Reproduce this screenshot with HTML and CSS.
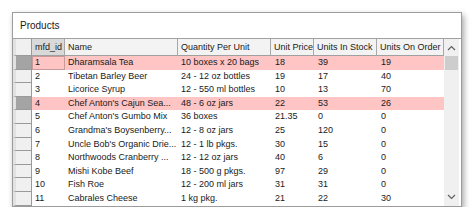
FILE: index.html
```html
<!DOCTYPE html>
<html>
<head>
  <meta charset="UTF-8">
  <title>Products</title>
  <link rel="stylesheet" href="styles.css">
</head>
<body>
  <div class="window">
    <div class="title">Products</div>

    <div class="grid">
      <div class="data">
        <div class="head">
          <div class="ind"></div>
          <div class="cell sorted">mfd_id</div>
          <div class="cell">Name</div>
          <div class="cell">Quantity Per Unit</div>
          <div class="cell">Unit Price</div>
          <div class="cell">Units In Stock</div>
          <div class="cell">Units On Order</div>
        </div>

        <div class="row sel">
          <div class="ind"></div><div class="cell focus">1</div><div class="cell">Dharamsala Tea</div><div class="cell">10 boxes x 20 bags</div><div class="cell num">18</div><div class="cell num">39</div><div class="cell num">19</div>
        </div>
        <div class="row">
          <div class="ind"></div><div class="cell">2</div><div class="cell">Tibetan Barley Beer</div><div class="cell">24 - 12 oz bottles</div><div class="cell num">19</div><div class="cell num">17</div><div class="cell num">40</div>
        </div>
        <div class="row">
          <div class="ind"></div><div class="cell">3</div><div class="cell">Licorice Syrup</div><div class="cell">12 - 550 ml bottles</div><div class="cell num">10</div><div class="cell num">13</div><div class="cell num">70</div>
        </div>
        <div class="row sel">
          <div class="ind"></div><div class="cell">4</div><div class="cell">Chef Anton's Cajun Sea...</div><div class="cell">48 - 6 oz jars</div><div class="cell num">22</div><div class="cell num">53</div><div class="cell num">26</div>
        </div>
        <div class="row">
          <div class="ind"></div><div class="cell">5</div><div class="cell">Chef Anton's Gumbo Mix</div><div class="cell">36 boxes</div><div class="cell num">21.35</div><div class="cell num">0</div><div class="cell num">0</div>
        </div>
        <div class="row">
          <div class="ind"></div><div class="cell">6</div><div class="cell">Grandma's Boysenberry...</div><div class="cell">12 - 8 oz jars</div><div class="cell num">25</div><div class="cell num">120</div><div class="cell num">0</div>
        </div>
        <div class="row">
          <div class="ind"></div><div class="cell">7</div><div class="cell">Uncle Bob's Organic Drie...</div><div class="cell">12 - 1 lb pkgs.</div><div class="cell num">30</div><div class="cell num">15</div><div class="cell num">0</div>
        </div>
        <div class="row">
          <div class="ind"></div><div class="cell">8</div><div class="cell">Northwoods Cranberry ...</div><div class="cell">12 - 12 oz jars</div><div class="cell num">40</div><div class="cell num">6</div><div class="cell num">0</div>
        </div>
        <div class="row">
          <div class="ind"></div><div class="cell">9</div><div class="cell">Mishi Kobe Beef</div><div class="cell">18 - 500 g pkgs.</div><div class="cell num">97</div><div class="cell num">29</div><div class="cell num">0</div>
        </div>
        <div class="row">
          <div class="ind"></div><div class="cell">10</div><div class="cell">Fish Roe</div><div class="cell">12 - 200 ml jars</div><div class="cell num">31</div><div class="cell num">31</div><div class="cell num">0</div>
        </div>
        <div class="row">
          <div class="ind"></div><div class="cell">11</div><div class="cell">Cabrales Cheese</div><div class="cell">1 kg pkg.</div><div class="cell num">21</div><div class="cell num">22</div><div class="cell num">30</div>
        </div>
      </div>

      <div class="scrollbar">
        <div class="arrow">
          <svg width="9" height="6" viewBox="0 0 9 6"><path d="M1 5 L4.5 1.5 L8 5" fill="none" stroke="#606060" stroke-width="1.2"/></svg>
        </div>
        <div class="thumb"></div>
        <div class="track"></div>
        <div class="arrow">
          <svg width="9" height="6" viewBox="0 0 9 6"><path d="M1 1 L4.5 4.5 L8 1" fill="none" stroke="#606060" stroke-width="1.2"/></svg>
        </div>
      </div>
    </div>
  </div>
</body>
</html>
```

FILE: styles.css
```css
body {
  margin: 0;
  background: #fff;
  font-family: 'Liberation Sans', Arial, sans-serif;
  color: #1a1a1a;
}

.window {
  margin: 12px 0 0 12px;
  width: 448px;
  border: 1px solid #9c9c9c;
  background: #fff;
  box-shadow: 2px 3px 6px rgba(0, 0, 0, 0.35);
}

.title {
  height: 25px;
  line-height: 26px;
  padding-left: 7px;
  font-size: 10px;
}

.grid {
  display: flex;
  border-top: 1px solid #a0a0a0;
  padding-right: 2px;
}

.data {
  width: 431px;
  font-size: 9px;
}

.head,
.row {
  display: grid;
  grid-template-columns: 19px 33px 113px 93px 43px 63px 67px;
}

.head {
  height: 17px;
  line-height: 17px;
  background: #f3f3f3;
}

.row {
  height: 13.6px;
  line-height: 13.6px;
}

.cell {
  padding-left: 3px;
  white-space: nowrap;
  overflow: hidden;
}

.cell.num {
  padding-left: 4px;
}

.head .cell {
  border-right: 1px solid #a8a8a8;
  border-bottom: 1px solid #a0a0a0;
}

.head .sorted {
  background: #d9d9d9;
}

.ind {
  box-sizing: border-box;
  background: #f0f0f0;
  border-left: 3px solid #e2e2e2;
  border-right: 1px solid #9a9a9a;
  border-bottom: 1px solid #9a9a9a;
}

.row.sel {
  background: #ffc4c4;
}

.row.sel .ind {
  background: #a4a4a4;
}

.focus {
  box-shadow: inset 0 0 0 1px #c99a9a;
}

.scrollbar {
  width: 15px;
  background: #f0f0f0;
  display: flex;
  flex-direction: column;
}

.arrow {
  height: 17px;
  display: flex;
  align-items: center;
  justify-content: center;
}

.thumb {
  height: 14px;
  margin: 0 1px;
  background: #cdcdcd;
}

.track {
  flex: 1;
}
```
